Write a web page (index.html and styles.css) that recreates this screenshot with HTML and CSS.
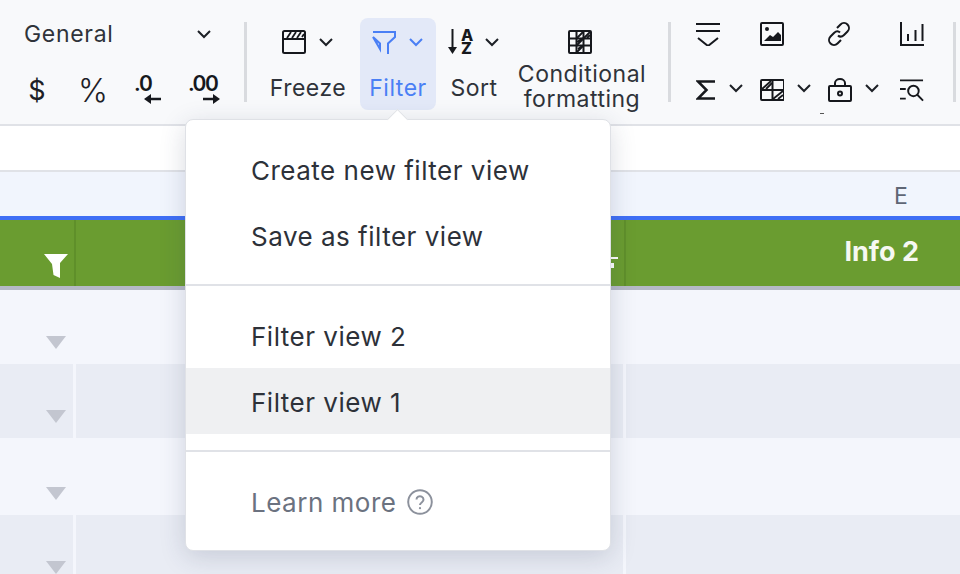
FILE: index.html
```html
<!DOCTYPE html>
<html lang="en">
<head>
<meta charset="utf-8">
<title>Filter menu</title>
<link rel="stylesheet" href="styles.css">
</head>
<body>
<div class="app">
  <header class="toolbar">
    <section class="numfmt">
      <div class="numfmt-top"><span>General</span><svg class="chev" viewBox="0 0 16 10"><path d="M2 2l6 6 6-6"/></svg></div>
      <div class="numfmt-row">
        <span class="sym sym-usd">$</span>
        <span class="sym sym-pct">%</span>
        <span class="dec"><span class="dec-t">.0</span><svg class="arrow" viewBox="0 0 17 10"><path d="M17 5H4"/><path class="fill" d="M0 5l7-5v10z"/></svg></span>
        <span class="dec dec-w"><span class="dec-t">.00</span><svg class="arrow" viewBox="0 0 17 10"><path d="M0 5h13"/><path class="fill" d="M17 5l-7-5v10z"/></svg></span>
      </div>
    </section>
    <i class="divider"></i>
    <div class="tool tool-freeze">
      <div class="tool-icons">
        <svg class="ico" viewBox="0 0 24 24"><rect x="1" y="1" width="22" height="22" rx="1.500"/><path d="M1 9h22"/><path class="thin" d="M5 8l4-6M10 8l4-6M15 8l4-6M20 7l2-3"/></svg>
        <svg class="chev" viewBox="0 0 16 10"><path d="M2 2l6 6 6-6"/></svg>
      </div>
      <span class="tool-label">Freeze</span>
    </div>
    <div class="tool tool-filter">
      <div class="tool-icons">
        <svg class="ico" viewBox="0 0 24 24"><path d="M1 2h22v5l-7 6.500V24M8 19v-5.500L1 7z"/></svg>
        <svg class="chev" viewBox="0 0 16 10"><path d="M2 2l6 6 6-6"/></svg>
      </div>
      <span class="tool-label">Filter</span>
    </div>
    <div class="tool tool-sort">
      <div class="tool-icons">
        <svg class="ico ico-sort" viewBox="0 0 26 26"><path d="M4.500 0v21"/><path class="fill" d="M4.500 25L0 18h9z"/><text class="sort-l" x="13" y="12">A</text><text class="sort-l" x="13" y="25">Z</text></svg>
        <svg class="chev" viewBox="0 0 16 10"><path d="M2 2l6 6 6-6"/></svg>
      </div>
      <span class="tool-label">Sort</span>
    </div>
    <div class="tool tool-cond">
      <div class="tool-icons tool-icons-cond">
        <svg class="ico" viewBox="0 0 24 24"><rect x="1" y="1" width="22" height="22" rx="1"/><path d="M1 8.500h22M1 15.500h22M8.500 1v22M15.500 1v22"/><path class="thin" d="M9 8l6-6M9 12l6-4M9 15l6-6M9 22l6-6M10 19l4-3M16 8l6-6M19 8l3-3"/></svg>
      </div>
      <span class="tool-label">Conditional formatting</span>
    </div>
    <i class="divider divider-2"></i>
    <section class="mini">
      <div class="mini-cell"><svg class="ico" viewBox="0 0 24 24"><path d="M0 2h24M0 9h24M2 16l10 8 10-8"/></svg></div>
      <div class="mini-cell"><svg class="ico" viewBox="0 0 24 24"><rect x="1" y="1" width="22" height="22" rx="1"/><circle class="fill" cx="7" cy="7" r="2"/><path class="fill" d="M4 19l6-6 3 2 5-5 3 3v6z"/></svg></div>
      <div class="mini-cell"><svg class="ico" viewBox="0 0 24 24"><path d="M10 6l3.500-3.500a4.500 4.500 0 0 1 7 7L17 13c-2 2-4.500 2-6 .5"/><path d="M14 18l-3.500 3.500a4.500 4.500 0 0 1-7-7L7 11c2-2 4.500-2 6-.5"/></svg></div>
      <div class="mini-cell"><svg class="ico" viewBox="0 0 24 24"><path d="M1 0v23h23M8 12v7M15.500 8v11M22.500 2v17"/></svg></div>
      <div class="mini-cell"><svg class="ico ico-sigma" viewBox="0 0 20 20"><path d="M19 1.500H2L10.500 10 2 18.500h17"/></svg><svg class="chev" viewBox="0 0 16 10"><path d="M2 2l6 6 6-6"/></svg></div>
      <div class="mini-cell"><svg class="ico" viewBox="0 0 24 22"><rect x="1" y="1" width="23" height="20" rx="1"/><path d="M1 11h23M12.500 1v20"/><path class="thin" d="M2 10l9-8M6 10l6-6M13 20l10-8M18 20l5-4"/></svg><svg class="chev" viewBox="0 0 16 10"><path d="M2 2l6 6 6-6"/></svg></div>
      <div class="mini-cell mini-lock"><svg class="ico" viewBox="0 0 24 24"><rect x="1" y="8" width="22" height="15" rx="1"/><path d="M7 8V5a5 4 0 0 1 10 0v3"/><circle cx="12" cy="15.500" r="2"/></svg><svg class="chev" viewBox="0 0 16 10"><path d="M2 2l6 6 6-6"/></svg></div>
      <div class="mini-cell"><svg class="ico" viewBox="0 0 25 24"><path d="M0 2h24M0 11h6M0 21h6"/><circle cx="14" cy="13" r="5.500"/><path d="M18 17l6 6"/></svg></div>
    </section>
    <i class="divider divider-3"></i>
    <i class="speck"></i>
  </header>

  <div class="formula"></div>

  <div class="sheet">
    <div class="row row-letters"><span></span><span></span><span class="letter">E</span></div>
    <div class="row row-head">
      <span class="cell"><svg class="funnel" viewBox="0 0 24 24"><path d="M0 0H24L16 9V24L9.500 21L8 10Z"/></svg></span>
      <span class="cell cell-second"><svg class="funnel" viewBox="0 0 24 24"><path d="M0 0h24v2H0zM14 6h6v5h-6z"/></svg></span>
      <span class="cell cell-title">Info 2</span>
    </div>
    <div class="row row-a"><span class="cell"><i class="tri"></i></span><span class="cell"></span><span class="cell"></span></div>
    <div class="row row-b"><span class="cell"><i class="tri"></i></span><span class="cell"></span><span class="cell"></span></div>
    <div class="row row-a row-short"><span class="cell"><i class="tri"></i></span><span class="cell"></span><span class="cell"></span></div>
    <div class="row row-b"><span class="cell"><i class="tri"></i></span><span class="cell"></span><span class="cell"></span></div>
  </div>

  <div class="menu">
    <i class="menu-tip"></i>
    <div class="menu-group">
      <div class="menu-item">Create new filter view</div>
      <div class="menu-item">Save as filter view</div>
    </div>
    <hr class="menu-sep">
    <div class="menu-group">
      <div class="menu-item">Filter view 2</div>
      <div class="menu-item is-hover">Filter view 1</div>
    </div>
    <hr class="menu-sep menu-sep-2">
    <div class="menu-item menu-learn">Learn more
      <svg class="help" viewBox="0 0 26 26"><circle cx="13" cy="13" r="11.800"/><path d="M9.500 10.500a3.500 3.300 0 1 1 5.500 2.700c-1.300.9-2 1.400-2 2.800"/><circle class="dot" cx="13" cy="19.200" r="1.100"/></svg>
    </div>
  </div>
</div>
</body>
</html>
```

FILE: styles.css
```css
* { box-sizing: border-box; }
html, body { margin: 0; padding: 0; }
body {
  width: 960px;
  height: 574px;
  overflow: hidden;
  font-family: Inter, "Liberation Sans", sans-serif;
  color: #2b2f36;
  background: #fff;
}
.app { position: relative; width: 960px; height: 574px; overflow: hidden; }

/* toolbar */
.toolbar {
  position: relative;
  display: flex;
  align-items: flex-start;
  height: 126px;
  background: #f8f9fb;
  border-bottom: 2px solid #e0e2e7;
}
.divider {
  flex: none;
  width: 3px;
  height: 80px;
  margin-top: 22px;
  background: #d9dbdf;
}
.divider-2 { margin-left: 21px; }
.speck {
  position: absolute;
  left: 820px;
  top: 113px;
  width: 4px;
  height: 1px;
  background: #555;
}
.chev {
  flex: none;
  width: 16px;
  height: 10px;
  fill: none;
  stroke: #1d2026;
  stroke-width: 2;
}
.ico {
  flex: none;
  width: 24px;
  height: 24px;
  fill: none;
  stroke: #16181d;
  stroke-width: 2;
}
.ico .thin { stroke-width: 1.800; }
.ico .fill, .arrow .fill { fill: #16181d; stroke: none; }

.numfmt { flex: none; width: 244px; padding: 20px 0 0 24px; }
.numfmt-top {
  display: flex;
  justify-content: space-between;
  align-items: center;
  width: 188px;
  height: 28px;
  font-size: 23px;
  letter-spacing: 0.700px;
  color: #2f333a;
}
.numfmt-row {
  display: flex;
  margin: 26px 0 0 -24px;
  height: 34px;
  align-items: center;
}
.sym { text-align: center; line-height: 34px; color: #1d2026; }
.sym-usd { width: 74px; font-size: 27px; font-weight: 400; }
.sym-pct { width: 38px; font-size: 32px; font-weight: 300; }
.dec {
  position: relative;
  display: flex;
  flex-direction: column;
  margin-left: 22px;
  width: 36px;
  height: 34px;
}
.dec-w { margin-left: 18px; }
.dec-t {
  font-size: 21px;
  font-weight: 600;
  line-height: 20px;
  letter-spacing: -1px;
  color: #16181d;
}
.dec-w .dec-t { letter-spacing: -1.500px; }
.arrow {
  width: 17px;
  height: 10px;
  margin: 0 0 0 10px;
  fill: none;
  stroke: #16181d;
  stroke-width: 2.500;
}
.dec-w .arrow { margin-left: 15px; }

.tool {
  flex: none;
  display: flex;
  flex-direction: column;
  align-items: center;
  height: 92px;
  margin-top: 18px;
  padding-top: 12px;
  border-radius: 8px;
}
.tool-icons {
  display: flex;
  align-items: center;
  gap: 12px;
  height: 24px;
}
.tool-label {
  margin-top: 21px;
  font-size: 23px;
  line-height: 26px;
  letter-spacing: 0.500px;
  text-align: center;
  color: #2f333a;
}
.tool-freeze { width: 76px; margin-left: 23px; }
.tool-filter {
  width: 76px;
  margin-left: 14px;
  background: #e3e9f8;
}
.tool-filter .ico { stroke: #4a7ff5; }
.tool-filter .chev { stroke: #4a7ff5; }
.tool-filter .tool-label { color: #4a7ff5; }
.tool-sort { width: 52px; margin-left: 12px; }
.tool-sort .tool-icons { gap: 10px; }
.ico-sort { width: 26px; height: 26px; overflow: visible; }
.sort-l { font-family: Inter, sans-serif; font-weight: 800; font-size: 16px; fill: #16181d; stroke: none; }
.tool-cond { width: 130px; margin-left: 17px; }
.tool-icons-cond { margin-right: 4px; }
.tool-cond .tool-label { margin-top: 8px; line-height: 24.500px; }

.mini {
  flex: none;
  display: grid;
  grid-template-columns: 64px 67px 73px 53px;
  grid-template-rows: 56px 34px;
  width: 282px;
  padding: 22px 0 0 25px;
  height: 124px;
}
.mini-cell { display: flex; align-items: flex-start; gap: 12px; }
.mini-cell .chev { margin-top: 5px; }
.mini-lock .ico { margin-left: 1px; }
.ico-sigma { width: 20px; height: 20px; margin-top: 2px; stroke-width: 2.500; }

/* formula bar */
.formula { height: 46px; background: #fff; border-bottom: 2px solid #e0e2e7; }

/* sheet */
.row {
  display: grid;
  grid-template-columns: 76px 550px 1fr;
}
.row-letters {
  height: 48px;
  background: #f1f5fd;
  border-bottom: 4px solid #3f6ff5;
}
.letter {
  font-size: 23px;
  line-height: 48px;
  color: #5f6675;
  padding-left: 268px;
}
.row-head {
  height: 70px;
  background: #6a9c30;
  border-bottom: 4px solid #b5b9c6;
}
.row-head .cell {
  border-right: 2px solid #5f8f2a;
  display: flex;
  justify-content: flex-end;
  align-items: flex-end;
  padding: 0 6px 8px 0;
}
.row-head .cell-second { padding-bottom: 5px; }
.row-head .cell-title {
  border-right: 0;
  align-items: center;
  padding: 0 41px 4px 0;
  font-size: 27px;
  font-weight: 700;
  color: #f6f8f2;
}
.funnel { width: 24px; height: 24px; fill: #fff; }
.row-a, .row-b { height: 74px; }
.row-a { background: #f4f6fc; }
.row-b { background: #e9ecf4; }
.row-short { height: 77px; }
.row-a .cell, .row-b .cell {
  display: flex;
  justify-content: center;
  align-items: flex-end;
  padding-bottom: 15px;
  border-right: 3px solid #f4f6fc;
}
.row-a .cell { border-right-color: transparent; }
.row-b .cell:last-child { border-right: 0; }
.row-a .cell:first-child, .row-b .cell:first-child { padding-left: 38px; }
.tri {
  flex: none;
  width: 0;
  height: 0;
  border-left: 10px solid transparent;
  border-right: 10px solid transparent;
  border-top: 13px solid #c3c6d0;
}

/* menu */
.menu {
  position: absolute;
  left: 185px;
  top: 119px;
  width: 426px;
  height: 432px;
  padding: 16px 0 15px;
  background: #fff;
  border: 1px solid #dfe1e6;
  border-radius: 8px;
  box-shadow: 0 6px 26px rgba(45, 55, 90, 0.18);
}
.menu-tip {
  position: absolute;
  left: 204px;
  top: -8px;
  width: 15px;
  height: 15px;
  background: #fff;
  border-left: 1px solid #dfe1e6;
  border-top: 1px solid #dfe1e6;
  transform: rotate(45deg);
}
.menu-item {
  display: flex;
  align-items: center;
  gap: 11px;
  height: 66px;
  padding: 2px 0 0 65px;
  font-size: 26px;
  letter-spacing: 0.500px;
  color: #2d3139;
}
.is-hover { background: #eff0f2; }
.menu-sep { height: 2px; margin: 16px 0 16px; border: 0; background: #e0e2e7; }
.menu-learn { color: #6b7280; }
.help {
  width: 26px;
  height: 26px;
  fill: none;
  stroke: #8c919c;
  stroke-width: 2;
}
.help .dot { fill: #8c919c; stroke: none; }
```
